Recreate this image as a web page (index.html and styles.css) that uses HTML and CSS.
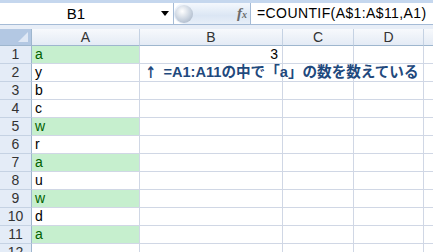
FILE: index.html
```html
<!DOCTYPE html>
<html lang="ja">
<head>
<meta charset="utf-8">
<link rel="stylesheet" href="styles.css">
</head>
<body>
<div class="app">
  <div class="topstrip"></div>
  <div class="fbar">
    <div class="namebox">
      <span class="name">B1</span>
      <svg class="arrow" width="8" height="5" viewBox="0 0 8 5"><path d="M0 0H8L4 5Z" fill="#000"/></svg>
    </div>
    <div class="knobbar">
      <span class="knob"></span>
      <span class="fx">f<sub>x</sub></span>
    </div>
    <div class="formula">=COUNTIF(A$1:A$11,A1)</div>
  </div>
  <div class="gap"></div>
  <div class="sheet">
    <div class="corner"><span class="tri"></span></div>
    <div class="ch">A</div><div class="ch">B</div><div class="ch">C</div><div class="ch">D</div><div class="ch last"></div>

    <div class="rh">1</div><div class="c g">a</div><div class="c num">3</div><div class="c"></div><div class="c"></div><div class="c"></div>
    <div class="rh">2</div><div class="c">y</div><div class="c note"><span class="up">↑</span><span class="nt">=A1:A11の中で「a」の数を数えている</span></div><div class="c"></div><div class="c"></div><div class="c"></div>
    <div class="rh">3</div><div class="c">b</div><div class="c"></div><div class="c"></div><div class="c"></div><div class="c"></div>
    <div class="rh">4</div><div class="c">c</div><div class="c"></div><div class="c"></div><div class="c"></div><div class="c"></div>
    <div class="rh">5</div><div class="c g">w</div><div class="c"></div><div class="c"></div><div class="c"></div><div class="c"></div>
    <div class="rh">6</div><div class="c">r</div><div class="c"></div><div class="c"></div><div class="c"></div><div class="c"></div>
    <div class="rh">7</div><div class="c g">a</div><div class="c"></div><div class="c"></div><div class="c"></div><div class="c"></div>
    <div class="rh">8</div><div class="c">u</div><div class="c"></div><div class="c"></div><div class="c"></div><div class="c"></div>
    <div class="rh">9</div><div class="c g">w</div><div class="c"></div><div class="c"></div><div class="c"></div><div class="c"></div>
    <div class="rh">10</div><div class="c">d</div><div class="c"></div><div class="c"></div><div class="c"></div><div class="c"></div>
    <div class="rh">11</div><div class="c g">a</div><div class="c"></div><div class="c"></div><div class="c"></div><div class="c"></div>
    <div class="rh">12</div><div class="c"></div><div class="c"></div><div class="c"></div><div class="c"></div><div class="c"></div>
  </div>
</div>
</body>
</html>
```
FILE: styles.css
```css
html, body {
  margin: 0;
  padding: 0;
  background: #fff;
  overflow: hidden;
}
.app {
  width: 433px;
  height: 252px;
  overflow: hidden;
  font-family: "Liberation Sans", Arial, "Noto Sans CJK JP", sans-serif;
}
.topstrip {
  height: 3px;
  background: #c5d7ee;
}
.fbar {
  height: 21px;
  display: flex;
  align-items: stretch;
  border-bottom: 1px solid #a5bbd6;
  background: #fff;
}
.namebox {
  width: 174px;
  display: flex;
  align-items: center;
  border-right: 1px solid #a5bbd6;
  box-sizing: border-box;
}
.name {
  flex: 0 0 152px;
  text-align: center;
  font-size: 15px;
  color: #000;
}
.arrow {
  margin-left: 9px;
}
.knobbar {
  width: 77px;
  display: flex;
  align-items: center;
  justify-content: space-between;
  background: linear-gradient(#f4f8fd, #dbe6f4 60%, #e8eff8);
  border-right: 1px solid #a5bbd6;
  border-radius: 10px 0 0 10px;
  box-sizing: border-box;
  padding-right: 3px;
}
.knob {
  width: 18px;
  height: 18px;
  border-radius: 50%;
  background: radial-gradient(circle at 40% 35%, #ffffff, #c7d1de 55%, #9aa8bb);
  margin-left: 1px;
}
.fx {
  font-family: "Liberation Serif", "Times New Roman", serif;
  font-style: italic;
  font-weight: bold;
  font-size: 15px;
  color: #6b6b6b;
}
.fx sub {
  font-size: 10px;
  vertical-align: baseline;
}
.formula {
  padding-left: 6px;
  font-size: 14px;
  line-height: 21px;
  letter-spacing: 0.4px;
  color: #000;
  white-space: nowrap;
}
.gap {
  height: 4px;
  background: #e8eef7;
}
.sheet {
  display: grid;
  grid-template-columns: 32px 108px 143px 71px 70px 40px;
  grid-template-rows: 17px repeat(12, 18px);
  font-size: 14px;
}
.corner {
  background: #b3c8e3;
  border-right: 1px solid #9eb6ce;
  border-bottom: 1px solid #9eb6ce;
  position: relative;
}
.tri {
  position: absolute;
  right: 3px;
  bottom: 3px;
  width: 0;
  height: 0;
  border-left: 10px solid transparent;
  border-bottom: 10px solid #dfe8f5;
}
.ch {
  background: linear-gradient(#f7f9fc, #e4ebf5);
  border-right: 1px solid #c5d2e3;
  border-bottom: 1px solid #9eb6ce;
  text-align: center;
  line-height: 16px;
  font-size: 14px;
  color: #333;
}
.rh {
  background: #e4ecf7;
  border-right: 1px solid #9eb6ce;
  border-bottom: 1px solid #c5d2e3;
  text-align: center;
  line-height: 17px;
  font-size: 14px;
  color: #333;
}
.c {
  border-right: 1px solid #d0d7e5;
  border-bottom: 1px solid #d0d7e5;
  padding-left: 3px;
  line-height: 17px;
  color: #000;
  white-space: nowrap;
}
.c.g {
  background: #c6efce;
  color: #006100;
}
.c.num {
  text-align: right;
  padding-right: 4px;
}
.c.note {
  overflow: visible;
  font-weight: bold;
  color: #1f497d;
  position: relative;
  z-index: 1;
  display: flex;
  align-items: center;
}
.up {
  font-family: "DejaVu Sans", sans-serif;
  font-size: 16px;
  font-weight: bold;
  margin-left: 1px;
  margin-right: 6px;
  transform: scaleX(0.8);
}
.nt {
  font-size: 14.6px;
  letter-spacing: 0;
}
```
